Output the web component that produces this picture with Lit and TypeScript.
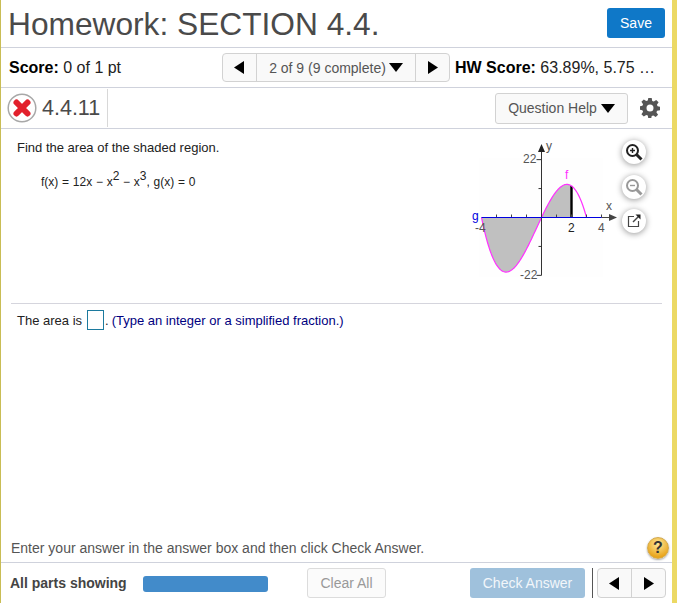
import { LitElement, html, css, svg } from 'lit';
import { customElement } from 'lit/decorators.js';

// graph scale, in svg units
const OX = 81.5;
const OY = 82.5;
const SX = 15;
const SY = 2.63;
const f = (x: number) => 12 * x - x * x - x * x * x;
const px = (x: number) => OX + x * SX;
const py = (y: number) => OY - y * SY;

function curve(from: number, to: number) {
  const pts: string[] = [];
  for (let x = from; x <= to + 0.001; x += 0.05) {
    pts.push(`${px(x).toFixed(2)},${py(f(x)).toFixed(2)}`);
  }
  return pts.join(' ');
}

const triLeft = svg`<svg width="11" height="13" viewBox="0 0 11 13"><path d="M10 0v13L0 6.500z" fill="#000"/></svg>`;
const triRight = svg`<svg width="11" height="13" viewBox="0 0 11 13"><path d="M1 0v13l10-6.500z" fill="#000"/></svg>`;
const triDown = svg`<svg width="14" height="9" viewBox="0 0 14 9"><path d="M0 0h14L7 9z" fill="#000"/></svg>`;

@customElement('app-root')
export class AppRoot extends LitElement {
  static styles = css`
    :host {
      display: block;
      width: 677px;
      height: 603px;
      overflow: hidden;
      font-family: 'Liberation Sans', Arial, sans-serif;
      color: #333;
      background: #fff;
    }
    .frame {
      background: #ecd964;
      width: 677px;
      height: 603px;
    }
    .page {
      box-sizing: border-box;
      width: 672px;
      height: 603px;
      background: #fff;
      border-left: 1px solid #c9bd55;
      display: flex;
      flex-direction: column;
    }
    .title-row {
      height: 47px;
      flex: none;
      display: flex;
      align-items: center;
      justify-content: space-between;
      padding: 0 7px;
      border-bottom: 1px solid #cfd2dc;
    }
    h1 {
      margin: 0;
      font-size: 31.700px;
      font-weight: 400;
      color: #4a4a4a;
      line-height: 44px;
    }
    .save {
      width: 58px;
      height: 30px;
      background: #0f78c8;
      color: #fff;
      border-radius: 3px;
      font-size: 14px;
      display: flex;
      align-items: center;
      justify-content: center;
      margin-top: -1px;
    }
    .score-row {
      height: 39px;
      flex: none;
      display: flex;
      align-items: center;
      padding-left: 8px;
      font-size: 16px;
      color: #222;
      border-bottom: 1px solid #cfd2dc;
    }
    .score-row b { color: #000; }
    .score { width: 213px; }
    .pager {
      display: flex;
      height: 29px;
      box-sizing: border-box;
      width: 228px;
      border: 1px solid #d2d2d2;
      border-radius: 4px;
      background: #f9f9f9;
      align-items: stretch;
      font-size: 14px;
      color: #555;
    }
    .pager .arrow {
      width: 33px;
      flex: none;
      display: flex;
      align-items: center;
      justify-content: center;
    }
    .pager .mid {
      flex: 1;
      display: flex;
      align-items: center;
      justify-content: center;
      gap: 3px;
      border-left: 1px solid #d2d2d2;
      border-right: 1px solid #d2d2d2;
      white-space: nowrap;
    }
    .hw { margin-left: 5px; white-space: nowrap; }
    .q-row {
      height: 40px;
      flex: none;
      display: flex;
      align-items: center;
      border-bottom: 1px solid #cfd2dc;
      padding-left: 6px;
    }
    .q-id {
      display: flex;
      align-items: center;
      gap: 5px;
      height: 38px;
      width: 100px;
      border-right: 1px solid #d8d8d8;
      font-size: 21.500px;
      color: #4a4a4a;
    }
    .q-help {
      margin-left: auto;
      width: 133px;
      height: 31px;
      box-sizing: border-box;
      border: 1px solid #d2d2d2;
      border-radius: 3px;
      background: #f9f9f9;
      display: flex;
      align-items: center;
      justify-content: center;
      gap: 4px;
      font-size: 14px;
      color: #555;
    }
    .gear {
      display: flex;
      margin: 0 12px;
    }
    .content {
      flex: 1;
      min-height: 0;
      position: relative;
      display: flex;
      flex-direction: column;
    }
    .problem {
      height: 175px;
      flex: none;
      display: flex;
      justify-content: space-between;
      margin: 0 10px;
      border-bottom: 1px solid #d5d5dd;
      padding-left: 6px;
      box-sizing: border-box;
      font-size: 13px;
      color: #222;
    }
    .lead { margin: 11px 0 0; line-height: 15px; }
    .formula {
      margin: 18px 0 0 24px;
      line-height: 18px;
      white-space: nowrap;
      font-size: 12px;
      word-spacing: 0.4px;
    }
    .formula sup { font-size: 12px; line-height: 0; vertical-align: 6px; }
    .graph { margin: 6px 32px 0 0; display: block; }
    .answer {
      display: flex;
      align-items: center;
      margin: 6px 0 0 16px;
      font-size: 13px;
      color: #222;
    }
    .answer .box {
      width: 15px;
      height: 18px;
      border: 1px solid #1c7a9e;
      margin: 0 1px 0 5px;
    }
    .answer .hint { color: #000080; margin-left: 3px; }
    .tools {
      position: absolute;
      left: 621px;
      top: 11px;
      display: flex;
      flex-direction: column;
      gap: 10.500px;
    }
    .tool {
      width: 24px;
      height: 24px;
      border-radius: 50%;
      background: #fff;
      box-shadow: 0 1px 6px rgba(0, 0, 0, 0.42);
      display: flex;
      align-items: center;
      justify-content: center;
    }
    .hint-row {
      margin-top: auto;
      height: 33px;
      box-sizing: border-box;
      flex: none;
      display: flex;
      align-items: center;
      justify-content: space-between;
      padding: 4px 3px 0 10px;
      font-size: 14px;
      color: #555;
      border-bottom: 1px solid #cfd2dc;
    }
    .help-dot {
      width: 22px;
      height: 22px;
      border-radius: 50%;
      background: radial-gradient(circle at 50% 30%, #fde79a, #e9a51c 75%);
      border: 1px solid #d3a94c;
      box-sizing: border-box;
      box-shadow: 0 1px 2px rgba(0, 0, 0, 0.35);
      color: #333;
      font-weight: 700;
      font-size: 16px;
      display: flex;
      align-items: center;
      justify-content: center;
    }
    .footer {
      height: 40px;
      flex: none;
      display: flex;
      align-items: center;
      padding: 0 6px 0 9px;
      box-sizing: border-box;
    }
    .parts { width: 133px; font-size: 14px; font-weight: 700; color: #444; margin-top: -1px; }
    .progress { width: 125px; height: 16px; background: #428bca; border-radius: 3px; margin-top: 1px; }
    .clear {
      margin-left: 39px;
      width: 79px;
      height: 30px;
      box-sizing: border-box;
      border: 1px solid #dcdcdc;
      border-radius: 3px;
      background: #fbfbfb;
      color: #999;
      font-size: 14px;
      display: flex;
      align-items: center;
      justify-content: center;
    }
    .check {
      margin-left: auto;
      width: 115px;
      height: 30px;
      background: #9fc1dc;
      color: #f2f6fa;
      border-radius: 3px;
      font-size: 14px;
      display: flex;
      align-items: center;
      justify-content: center;
    }
    .sep { width: 1px; height: 30px; background: #555; margin: 0 4px 0 7px; }
    .nav {
      width: 69px;
      height: 30px;
      box-sizing: border-box;
      border: 1px solid #d2d2d2;
      border-radius: 4px;
      background: #f9f9f9;
      display: flex;
    }
    .nav span {
      flex: 1;
      display: flex;
      align-items: center;
      justify-content: center;
    }
    .nav span + span { border-left: 1px solid #d2d2d2; }
    .lbl { font-family: 'Liberation Sans', Arial, sans-serif; font-size: 12px; }
  `;

  private renderGraph() {
    const xTicks = [-3, -2, -1, 1, 2, 3, 4];
    return html`<svg class="graph" width="170" height="150" viewBox="0 0 170 150">
      <rect x="19" y="23" width="124" height="119" fill="#fefefe"/>
      <polygon points="${px(-4)},${OY} ${curve(-4, 0)}" fill="#c0c0c0"/>
      <polygon points="${OX},${OY} ${curve(0, 2)} ${px(2)},${OY}" fill="#c0c0c0"/>
      <line x1=${px(2)} y1=${OY} x2=${px(2)} y2=${py(f(2))} stroke="#000" stroke-width="2.400"/>
      <polyline points=${curve(-4, 3)} fill="none" stroke="#ff30ff" stroke-width="1.200"/>
      ${xTicks.map((t) => svg`<line x1=${px(t)} x2=${px(t)} y1=${OY - 3} y2=${OY} stroke="#444"/>`)}
      <line x1=${OX} y1="14" x2=${OX} y2=${py(-22)} stroke="#333" stroke-width="1"/>
      <path d="M${OX} 9l-3.500 8h7z" fill="#222"/>
      <line x1=${px(4)} y1=${OY} x2="150" y2=${OY} stroke="#444" stroke-width="1"/>
      <path d="M157 ${OY}l-8-3.500v7z" fill="#444"/>
      <line x1=${px(-4)} y1=${OY} x2=${px(4)} y2=${OY} stroke="#0000e0" stroke-width="1"/>
      <line x1=${OX - 5} y1=${py(22)} x2=${OX} y2=${py(22)} stroke="#333"/>
      <line x1=${OX - 3} y1=${py(11)} x2=${OX} y2=${py(11)} stroke="#333"/>
      <line x1=${OX - 3} y1=${py(-11)} x2=${OX} y2=${py(-11)} stroke="#333"/>
      <line x1=${OX - 5} y1=${py(-22)} x2=${OX} y2=${py(-22)} stroke="#333"/>
      <text class="lbl" x="86" y="15" fill="#555">y</text>
      <text class="lbl" x="63" y="28" fill="#555">22</text>
      <text class="lbl" x="60" y="144" fill="#555">-22</text>
      <text class="lbl" x="105" y="44" fill="#ff30ff">f</text>
      <text class="lbl" x="146" y="75" fill="#555">x</text>
      <text class="lbl" x="12" y="85" fill="#0000e0">g</text>
      <text class="lbl" x="15" y="97" fill="#555">-4</text>
      <text class="lbl" x="108" y="97" fill="#222">2</text>
      <text class="lbl" x="138" y="97" fill="#555">4</text>
    </svg>`;
  }

  render() {
    return html`<div class="frame"><div class="page">
      <div class="title-row">
        <h1>Homework: SECTION 4.4.</h1>
        <div class="save">Save</div>
      </div>
      <div class="score-row">
        <div class="score"><b>Score:</b> 0 of 1 pt</div>
        <div class="pager">
          <span class="arrow">${triLeft}</span>
          <span class="mid">2 of 9 (9 complete) ${triDown}</span>
          <span class="arrow">${triRight}</span>
        </div>
        <div class="hw"><b>HW Score:</b> 63.89%, 5.75 …</div>
      </div>
      <div class="q-row">
        <div class="q-id">
          <svg width="30" height="30" viewBox="0 0 30 30">
            <circle cx="15" cy="15" r="13.800" fill="#fff" stroke="#a8a8a8" stroke-width="1.500"/>
            <path d="M9.500 9.500l11 11M20.500 9.500l-11 11" stroke="#e2202c" stroke-width="6" stroke-linecap="round"/>
          </svg>
          4.4.11
        </div>
        <div class="q-help">Question Help ${triDown}</div>
        <span class="gear">
          <svg width="20" height="20" viewBox="0 0 20 20">
            <path fill="#555" fill-rule="evenodd" d="M8.300 0h3.400l.5 2.900 1.600.7L16.200 1.900l2.400 2.400-1.700 2.400.7 1.600 2.400.5v3.400l-2.900.5-.7 1.600 1.700 2.400-2.400 2.400-2.400-1.700-1.600.7-.5 2.400H8.300l-.5-2.900-1.600-.7-2.400 1.700-2.400-2.400 1.700-2.400-.7-1.600L0 11.700V8.300l2.400-.5.7-1.600-1.700-2.400 2.400-2.400 2.400 1.700 1.600-.7zM10 6.500a3.500 3.500 0 1 0 0 7 3.500 3.500 0 0 0 0-7z"/>
          </svg>
        </span>
      </div>
      <div class="content">
        <div class="problem">
          <div>
            <p class="lead">Find the area of the shaded region.</p>
            <p class="formula">f(x) = 12x − x<sup>2</sup> − x<sup>3</sup>, g(x) = 0</p>
          </div>
          ${this.renderGraph()}
        </div>
        <div class="answer">The area is <span class="box"></span>. <span class="hint">(Type an integer or a simplified fraction.)</span></div>
        <div class="tools">
          <span class="tool">
            <svg width="20" height="20" viewBox="0 0 20 20" fill="none" stroke="#222"><circle cx="8.500" cy="8.500" r="5.500" stroke-width="2"/><path d="M12.500 12.500l5 5" stroke-width="3"/><path d="M6 8.500h5M8.500 6v5" stroke-width="1.400"/></svg>
          </span>
          <span class="tool">
            <svg width="20" height="20" viewBox="0 0 20 20" fill="none" stroke="#999"><circle cx="8.500" cy="8.500" r="5.500" stroke-width="2"/><path d="M12.500 12.500l5 5" stroke-width="3"/><path d="M6 8.500h5" stroke-width="1.400"/></svg>
          </span>
          <span class="tool">
            <svg width="16" height="16" viewBox="0 0 16 16" fill="none" stroke="#444"><path d="M8 3.500H2.500v10h10V8" stroke-width="1.200"/><path d="M7 9l6-6" stroke-width="1.500"/><path d="M9.500 1.500h5v5z" fill="#222" stroke="none"/></svg>
          </span>
        </div>
        <div class="hint-row">
          <span>Enter your answer in the answer box and then click Check Answer.</span>
          <span class="help-dot">?</span>
        </div>
        <div class="footer">
          <div class="parts">All parts showing</div>
          <div class="progress"></div>
          <div class="clear">Clear All</div>
          <div class="check">Check Answer</div>
          <div class="sep"></div>
          <div class="nav"><span>${triLeft}</span><span>${triRight}</span></div>
        </div>
      </div>
    </div></div>`;
  }
}
